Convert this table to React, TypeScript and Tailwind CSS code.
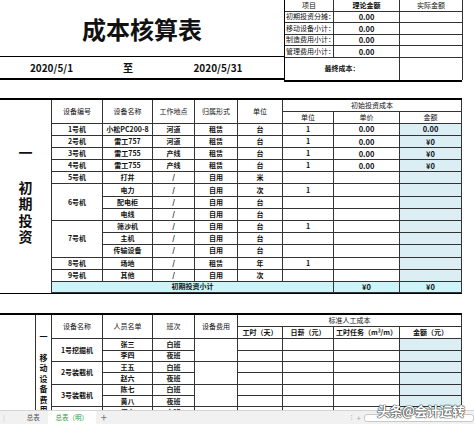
import React from "react";
import clsx from "clsx";

const C = ({
  children,
  className,
}: {
  children?: React.ReactNode;
  className?: string;
}) => (
  <div
    className={clsx(
      "flex items-center justify-center overflow-hidden whitespace-nowrap border-r border-b border-[#333] leading-none",
      className
    )}
  >
    {children}
  </div>
);

const blue = "bg-[#daeef3]";

type Row = {
  no?: string;
  span?: number;
  name: string;
  place: string;
  kind: string;
  unit: string;
  qty: string;
  price: string;
  amount: string;
};

const rows: Row[] = [
  { no: "1号机", name: "小松PC200-8", place: "河道", kind: "租赁", unit: "台", qty: "1", price: "0.00", amount: "0.00" },
  { no: "2号机", name: "雷工757", place: "河道", kind: "租赁", unit: "台", qty: "1", price: "0.00", amount: "¥0" },
  { no: "3号机", name: "雷工755", place: "产线", kind: "租赁", unit: "台", qty: "1", price: "0.00", amount: "¥0" },
  { no: "4号机", name: "雷工755", place: "产线", kind: "租赁", unit: "台", qty: "1", price: "0.00", amount: "¥0" },
  { no: "5号机", name: "打井", place: "/", kind: "自用", unit: "米", qty: "", price: "", amount: "" },
  { no: "6号机", span: 3, name: "电力", place: "/", kind: "自用", unit: "次", qty: "1", price: "", amount: "" },
  { name: "配电柜", place: "/", kind: "自用", unit: "台", qty: "", price: "", amount: "" },
  { name: "电线", place: "/", kind: "自用", unit: "台", qty: "", price: "", amount: "" },
  { no: "7号机", span: 3, name: "筛沙机", place: "/", kind: "自用", unit: "台", qty: "1", price: "", amount: "" },
  { name: "主机", place: "/", kind: "自用", unit: "台", qty: "", price: "", amount: "" },
  { name: "传输设备", place: "/", kind: "自用", unit: "台", qty: "", price: "", amount: "" },
  { no: "8号机", name: "场地", place: "/", kind: "租赁", unit: "年", qty: "1", price: "", amount: "" },
  { no: "9号机", name: "其他", place: "/", kind: "自用", unit: "次", qty: "", price: "", amount: "" },
];

const machines = ["1号挖掘机", "2号装载机", "3号装载机", "4号装载机"];
const staff = [
  ["张三", "白班"],
  ["李四", "夜班"],
  ["王五", "白班"],
  ["赵六", "夜班"],
  ["陈七", "白班"],
  ["黄八", "夜班"],
  ["何十", "白班"],
  ["", "夜班"],
];

const Summary = () => (
  <div className="grid w-[178px] grid-cols-[49px_66px_63px] grid-rows-[11.5px_11.5px_11.5px_11.5px_11.5px_22px] border-l border-b-2 border-black text-[7px]">
    <C>项目</C>
    <C className="font-bold">理论金额</C>
    <C>实际金额</C>
    {["初期投资分摊：", "移动设备小计：", "制造费用小计：", "管理费用小计："].map((l) => (
      <React.Fragment key={l}>
        <C className="justify-start pl-[1px]">{l}</C>
        <C className="font-bold text-[7.5px]">0.00</C>
        <C />
      </React.Fragment>
    ))}
    <C className="col-span-2 border-b-0 font-bold">最终成本：</C>
    <C className="border-b-0" />
  </div>
);

const Investment = () => (
  <div className="grid grid-cols-[52px_51px_50px_42px_43px_45px_51px_66px_62px] grid-rows-[12px_12px_repeat(13,12.2px)_11px] border-t-2 border-b border-black text-[7px] font-bold">
    <C className="row-span-16 flex-col justify-start font-bold text-[14px] border-b-0">
      <div className="mt-[45px] leading-[14px]">一</div>
      <div className="mt-[20px] flex flex-col items-center">
        {"初期投资".split("").map((c) => (
          <span key={c} className="h-[16.5px] leading-[16.5px]">
            {c}
          </span>
        ))}
      </div>
    </C>
    <C className="row-span-2 font-normal">设备编号</C>
    <C className="row-span-2 font-normal">设备名称</C>
    <C className="row-span-2 font-normal">工作地点</C>
    <C className="row-span-2 font-normal">归属形式</C>
    <C className="row-span-2 font-normal">单位</C>
    <C className="col-span-3 font-normal">初始投资成本</C>
    <C className="font-normal">单位</C>
    <C className="font-normal">单价</C>
    <C className="font-normal">金额</C>
    {rows.map((r, i) => (
      <React.Fragment key={i}>
        {r.no && <C className={r.span === 3 ? "row-span-3" : ""}>{r.no}</C>}
        <C>{r.name}</C>
        <C>{r.place}</C>
        <C>{r.kind}</C>
        <C>{r.unit}</C>
        <C>{r.qty}</C>
        <C className="text-[7.5px]">{r.price}</C>
        <C className={clsx(blue, "text-[7.5px]")}>{r.amount}</C>
      </React.Fragment>
    ))}
    <C className="col-span-6 bg-[#cdf4f9]">初期投资小计</C>
    <C className="bg-[#cdf4f9] text-[7.5px]">¥0</C>
    <C className="bg-[#cdf4f9] text-[7.5px]">¥0</C>
  </div>
);

const Mobile = () => (
  <div className="grid grid-cols-[36px_16px_51px_50px_42px_43px_45px_51px_66px_62px] grid-rows-[12px_12.5px_repeat(8,11.3px)] border-t-2 border-black text-[7px] font-bold">
    <C className="row-span-10 border-b-0" />
    <C className="row-span-10 flex-col justify-start border-b-0 text-[8px]">
      <div className="mt-[18px]">一</div>
      <div className="mt-[12px] flex flex-col items-center">
        {"移动设备费用".split("").map((c) => (
          <span key={c} className="h-[10.5px] leading-[10.5px]">
            {c}
          </span>
        ))}
      </div>
    </C>
    <C className="row-span-2 font-normal">设备名称</C>
    <C className="row-span-2 font-normal">人员名单</C>
    <C className="row-span-2 font-normal">班次</C>
    <C className="row-span-2 font-normal">设备费用</C>
    <C className="col-span-4 font-normal">标准人工成本</C>
    <C>工时（天）</C>
    <C>日薪（元）</C>
    <C>工时任务（m³/m）</C>
    <C>金额（元）</C>
    {staff.map(([p, s], i) => (
      <React.Fragment key={i}>
        {i % 2 === 0 && <C className="row-span-2">{machines[i / 2]}</C>}
        <C>{p}</C>
        <C>{s}</C>
        {i % 2 === 0 && <C className="row-span-2" />}
        <C />
        <C />
        <C />
        <C className={blue} />
      </React.Fragment>
    ))}
  </div>
);

export default function App() {
  return (
    <div className="relative flex h-[424px] w-[474px] flex-col overflow-hidden bg-white font-['Noto_Sans_CJK_SC','Noto_Sans',sans-serif] text-[#111]">
      <div className="h-[410px] overflow-hidden">
        <div className="flex w-[462px]">
          <div className="flex w-[284px] flex-col">
            <div className="flex h-[56px] items-center justify-center pt-[1px] text-[24px] font-bold">
              成本核算表
            </div>
            <div className="flex h-[24px] items-center border-t border-b-2 border-black text-[10px] font-bold">
              <div className="w-[103px] text-center">2020/5/1</div>
              <div className="w-[50px] text-center">至</div>
              <div className="w-[130px] text-center">2020/5/31</div>
            </div>
          </div>
          <Summary />
        </div>
        <div className="mt-[16px] w-[462px]">
          <Investment />
        </div>
        <div className="mt-[19px] w-[462px]">
          <Mobile />
        </div>
      </div>

      <div className="flex h-[14px] items-center border-t border-[#d4d4d4] bg-[#f1f1f1] text-[6.5px] leading-none">
        <span className="ml-[3px] text-[#c4c4c4]">|</span>
        <span className="ml-[22px] text-[#555]">总表</span>
        <div className="ml-[8px] flex h-full w-[48px] items-center justify-center bg-white text-[#2f9e44]">
          总表（明）
        </div>
        <span className="ml-[5px] text-[11px] text-[#777]">+</span>
        <span className="ml-auto text-[#aaa]">⁝</span>
        <span className="ml-[4px] text-[8px] text-[#aaa]">+</span>
        <div className="ml-[3px] h-[8px] w-[110px] rounded-[3px] border border-[#c8c8c8] bg-white" />
      </div>

      <div className="absolute left-[377px] top-[401px] text-[13px] font-bold tracking-[-0.5px] text-white [text-shadow:0_0_1px_#222,0_0_1px_#222,0_0_1px_#222]">
        头条@会计运转
      </div>
    </div>
  );
}
